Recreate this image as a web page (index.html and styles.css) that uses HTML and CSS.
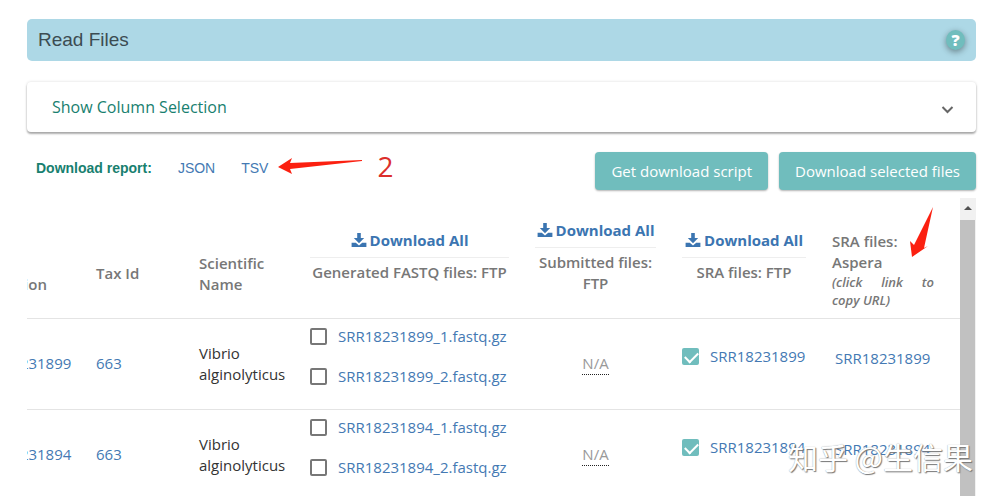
FILE: index.html
```html
<!DOCTYPE html>
<html lang="en">
<head>
	<meta charset="utf-8">
	<title>Read Files</title>
	<link rel="stylesheet" href="styles.css">
</head>
<body>
	<svg class="defs" aria-hidden="true">
		<symbol id="download" viewBox="0 0 16 16">
			<path d="M6.2 1h3.6v5h3.4L8 11.2 2.8 6h3.4z"/>
			<path d="M.6 10.8h4.2L8 13.4l3.2-2.6h4.2v4.2H.6z"/>
		</symbol>
	</svg>
	<main class="page">
		<div class="title-bar">
			<h1>Read Files</h1>
			<button class="help" type="button" aria-label="Help">?</button>
		</div>

		<button class="panel" type="button">
			<span>Show Column Selection</span>
			<svg class="chevron" viewBox="0 0 12 8"><path d="M1 1l5 5 5-5"/></svg>
		</button>

		<div class="toolbar">
			<div class="report">
				<strong>Download report:</strong>
				<a href="#">JSON</a>
				<a href="#">TSV</a>
				<!-- arrow pointing at TSV -->
				<svg class="arrow-left" viewBox="0 0 84 16"><path d="M0 9L14 0 12 5 84 2 84 3 12 11 14 16z"/></svg>
				<span class="step">2</span>
			</div>
			<div class="actions">
				<button class="btn" type="button">Get download script</button>
				<button class="btn" type="button">Download selected files</button>
			</div>
		</div>

		<div class="results">
			<div class="table-wrap">
				<table>
					<colgroup>
						<col class="c-run"><col class="c-tax"><col class="c-name"><col class="c-fastq"><col class="c-sub"><col class="c-sra"><col class="c-aspera">
					</colgroup>
					<thead>
						<tr>
							<th class="plain"><br>Accession</th>
							<th class="plain">Tax Id</th>
							<th class="plain">Scientific Name</th>
							<th class="files"><a href="#"><svg><use href="#download"/></svg>Download All</a><div>Generated FASTQ files: FTP</div></th>
							<th class="files"><a href="#"><svg><use href="#download"/></svg>Download All</a><div>Submitted files: FTP</div></th>
							<th class="files"><a href="#"><svg><use href="#download"/></svg>Download All</a><div>SRA files: FTP</div></th>
							<th class="aspera">SRA files: Aspera<p>(click link to copy&nbsp;URL)</p></th>
						</tr>
					</thead>
					<tbody>
						<tr>
							<td><a href="#">SRR18231899</a></td>
							<td><a href="#">663</a></td>
							<td>Vibrio alginolyticus</td>
							<td class="links">
								<div class="file"><input type="checkbox" aria-label="SRR18231899_1"><a href="#">SRR18231899_1.fastq.gz</a></div>
								<div class="file"><input type="checkbox" aria-label="SRR18231899_2"><a href="#">SRR18231899_2.fastq.gz</a></div>
							</td>
							<td class="na"><abbr>N/A</abbr></td>
							<td class="links"><div class="file"><input type="checkbox" checked aria-label="SRR18231899"><a href="#">SRR18231899</a></div></td>
							<td class="copy"><a href="#">SRR18231899</a></td>
						</tr>
						<tr>
							<td><a href="#">SRR18231894</a></td>
							<td><a href="#">663</a></td>
							<td>Vibrio alginolyticus</td>
							<td class="links">
								<div class="file"><input type="checkbox" aria-label="SRR18231894_1"><a href="#">SRR18231894_1.fastq.gz</a></div>
								<div class="file"><input type="checkbox" aria-label="SRR18231894_2"><a href="#">SRR18231894_2.fastq.gz</a></div>
							</td>
							<td class="na"><abbr>N/A</abbr></td>
							<td class="links"><div class="file"><input type="checkbox" checked aria-label="SRR18231894"><a href="#">SRR18231894</a></div></td>
							<td class="copy"><a href="#">SRR18231894</a></td>
						</tr>
					</tbody>
				</table>
			</div>
			<div class="scrollbar">
				<svg class="up" viewBox="0 0 8 4"><path d="M0 4L4 0l4 4z"/></svg>
				<div class="thumb"></div>
			</div>
			<!-- arrow pointing at the Aspera column -->
			<svg class="arrow-down" viewBox="0 0 24 50"><path d="M23 0L14 41 18 39 2 50 0 34 4 38z"/></svg>
		</div>
		<div class="watermark">知乎 @生信果</div>
	</main>
</body>
</html>
```
FILE: styles.css
```css
* {
	box-sizing: border-box;
}
body {
	margin: 0;
	background: #fff;
	color: #333;
	font: 15px/21px "Open Sans", "Noto Sans", sans-serif;
}
a {
	color: #4479b3;
	text-decoration: none;
}
button {
	border: 0;
	font: inherit;
	cursor: pointer;
}
.defs {
	display: none;
}
.page {
	position: relative;
	display: flex;
	flex-direction: column;
	height: 100vh;
	padding: 19px 24px 0 27px;
	overflow: hidden;
}

.title-bar {
	display: flex;
	flex: none;
	align-items: center;
	justify-content: space-between;
	height: 42px;
	padding: 0 11px;
	border-radius: 5px;
	background: #add8e6;
}
.title-bar h1 {
	margin: 0;
	color: #3c4c52;
	font: 19px/24px "Liberation Sans", Arial, sans-serif;
}
.help {
	width: 19px;
	height: 20px;
	padding: 0;
	border-radius: 50%;
	background: #70bdbd;
	box-shadow: 0 2px 6px rgba(0, 0, 0, 0.4);
	color: #fff;
	font-size: 16px;
	font-weight: 800;
	line-height: 20px;
}

.panel {
	display: flex;
	flex: none;
	align-items: center;
	justify-content: space-between;
	height: 50px;
	margin-top: 21px;
	padding: 0 22px 0 25px;
	border-radius: 4px;
	background: #fff;
	box-shadow: 0 2px 2px rgba(0, 0, 0, 0.3), 0 0 3px rgba(0, 0, 0, 0.15);
	color: #18806f;
	font-size: 16px;
}
.chevron {
	width: 13px;
	height: 8px;
	margin-top: 6px;
	fill: none;
	stroke: #666;
	stroke-width: 2;
}

.toolbar {
	display: flex;
	flex: none;
	justify-content: space-between;
	margin-top: 20px;
}
.report {
	display: flex;
	align-items: center;
	height: 32px;
	padding-left: 9px;
	font-family: "Liberation Sans", Arial, sans-serif;
	font-size: 14px;
}
.report strong {
	color: #18806f;
}
.report a {
	margin-left: 26px;
}
.arrow-left {
	width: 84px;
	height: 16px;
	margin: 0 15px 4px 10px;
	fill: #fb2010;
}
.step {
	margin-bottom: 4px;
	color: #dc2f2b;
	font: 28px/32px "Open Sans", sans-serif;
}
.actions {
	display: flex;
	gap: 11px;
}
.btn {
	height: 38px;
	padding: 0 16px;
	border-radius: 4px;
	background: #70bdbd;
	box-shadow: 0 1px 2px rgba(0, 0, 0, 0.3);
	color: #fff;
}

.results {
	position: relative;
	display: flex;
	flex: 1;
	min-height: 0;
	margin-top: 8px;
}
.table-wrap {
	flex: 1;
	overflow: hidden;
}
/* the table is scrolled sideways, so the first column is cut off */
table {
	width: calc(100% + 51px);
	margin-left: -51px;
	border-collapse: collapse;
	table-layout: fixed;
}
.c-run { width: 120px; }
.c-tax { width: 103px; }
.c-name { width: 111px; }
.c-fastq { width: 225px; }
.c-sub { width: 147px; }
.c-sra { width: 150px; }
.c-aspera { width: 128px; }
th,
td {
	padding: 0 24px 0 0;
	border-bottom: 1px solid #e4e4e4;
	text-align: left;
	vertical-align: middle;
}
th {
	height: 120px;
	color: #777;
	font-size: 15px;
	font-weight: 600;
}
td {
	height: 91px;
}
th.plain {
	padding-top: 32px;
}
th.files {
	padding: 0 26px 2px 0;
	text-align: center;
}
th.files a {
	display: block;
	padding-bottom: 6px;
	border-bottom: 1px solid #eee;
	color: #3b75b1;
	font-weight: 700;
	white-space: nowrap;
}
th.files svg {
	width: 16px;
	height: 16px;
	margin-right: 3px;
	fill: #3b75b1;
	vertical-align: -2px;
}
th.files div {
	margin-top: 4px;
}
th.aspera {
	padding: 24px 26px 0 0;
}
th.aspera p {
	margin: 0;
	font-size: 13px;
	font-style: italic;
	line-height: 18px;
	text-align: justify;
}
td.links {
	padding-bottom: 14px;
}
.file {
	display: flex;
	align-items: center;
	gap: 11px;
	white-space: nowrap;
}
.file + .file {
	margin-top: 19px;
}
.file input {
	flex: none;
	width: 17px;
	height: 17px;
	margin: 0;
	border: 2px solid #777;
	border-radius: 2px;
	appearance: none;
}
.file input:checked {
	border: 0;
	background: #70bdbd;
}
.file input:checked::before {
	content: "";
	display: block;
	width: 11px;
	height: 6px;
	margin: 4px 3px;
	border: solid #fff;
	border-width: 0 0 2px 2px;
	transform: rotate(-45deg);
}
td.na {
	padding-right: 26px;
	color: #999;
	text-align: center;
}
td.na abbr {
	display: inline-block;
	border-bottom: 1px dotted #222;
}
td.copy {
	padding: 0 0 10px 3px;
}

.scrollbar {
	display: flex;
	flex-direction: column;
	width: 16px;
	background: #f1f1f1;
}
.up {
	width: 8px;
	height: 4px;
	margin: 8px 4px 10px;
	fill: #505050;
}
.thumb {
	flex: 1;
	margin-right: 1px;
	background: #c1c1c1;
}
.arrow-down {
	position: absolute;
	top: 9px;
	right: 42px;
	width: 24px;
	height: 50px;
	fill: #fb2010;
}
.watermark {
	position: absolute;
	right: 27px;
	bottom: 20px;
	color: #fff;
	font: 30px/40px "Noto Sans CJK SC", sans-serif;
	text-shadow: 1px 1px 1px #777, 0 0 1px #999;
}
```
